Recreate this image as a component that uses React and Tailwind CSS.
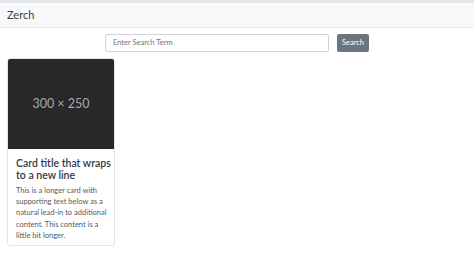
export default function App() {
  return (
    <div className="w-[474px] h-[253px] bg-white overflow-hidden text-[#212529]" style={{ fontFamily: 'Lato, "Noto Sans", sans-serif' }}>
      <div className="h-[3px] bg-[#e3e5e8]" />
      <nav className="h-[25px] bg-[#f8f9fa] border-b border-[#e5e7ea] flex items-center px-[7px]">
        <span className="text-[11px] text-[#3a3d40]">Zerch</span>
      </nav>
      <div className="flex justify-center items-center gap-[8px] mt-[6px]">
        <div className="w-[224px] h-[18px] border border-[#ced4da] rounded-[2px] flex items-center px-[7px]">
          <span className="text-[7.5px] text-[#6c757d]">Enter Search Term</span>
        </div>
        <button className="h-[18px] w-[32px] bg-[#6c757d] rounded-[2px] text-white text-[7.5px] flex items-center justify-center">Search</button>
      </div>
      <div className="ml-[7px] mt-[6px] w-[108px] h-[188px] border border-[#e3e5e8] rounded-[3px] overflow-hidden">
        <div className="h-[90px] bg-[#282828] flex items-center justify-center">
          <span className="text-[12.5px] text-[#a9a9a9]">300 × 250</span>
        </div>
        <div className="pl-[8px] pr-[3px] pt-[8px]">
          <div className="text-[10.5px] leading-[12px] font-semibold text-[#343a40]">Card title that wraps to a new line</div>
          <p className="mt-[4px] text-[7.5px] leading-[11.2px] text-[#56595c]">This is a longer card with supporting text below as a natural lead-in to additional content. This content is a little bit longer.</p>
        </div>
      </div>
    </div>
  );
}
